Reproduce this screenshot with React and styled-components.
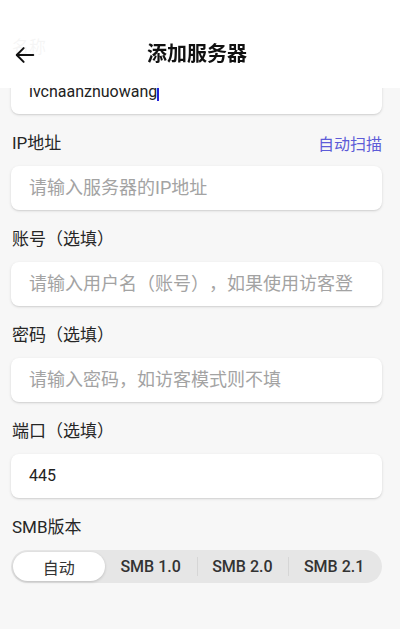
import React from "react";
import styled, { createGlobalStyle } from "styled-components";

const Global = createGlobalStyle`
  html, body { margin: 0; padding: 0; background: #f7f7f7; }
  body {
    font-family: Roboto, "Noto Sans CJK SC", sans-serif;
    color: #222;
    text-spacing-trim: space-all;
  }
  * { box-sizing: border-box; }
`;

const Page = styled.div`
  min-height: 629px;
  background: #f7f7f7;
  padding: 36px 18px 30px 11px;
  display: flex;
  flex-direction: column;
`;

const Header = styled.header`
  position: fixed;
  top: 0;
  left: 0;
  right: 0;
  height: 88px;
  padding: 20px 20px 0 14px;
  background: rgba(255, 255, 255, 0.955);
  display: grid;
  grid-template-columns: 1fr auto 1fr;
  align-items: center;
  z-index: 10;
`;

const BackButton = styled.button`
  justify-self: start;
  border: 0;
  background: none;
  padding: 0;
  margin-top: 2px;
  display: flex;
  color: #111;
`;

const Title = styled.h1`
  margin: 0;
  font-size: 20px;
  font-weight: 700;
  color: #111;
  line-height: 28px;
`;

const Field = styled.section`
  display: flex;
  flex-direction: column;
  margin-bottom: 18px;
`;

const LabelRow = styled.div`
  display: flex;
  justify-content: space-between;
  align-items: center;
  height: 22px;
  margin-bottom: 12px;
`;

const Label = styled.span`
  font-size: 17px;
  line-height: 22px;
  color: #262626;
  padding-left: 1px;
`;

const Action = styled.span`
  font-size: 16px;
  color: #5d5bd8;
`;

const Input = styled.div`
  height: 44px;
  background: #fff;
  border-radius: 8px;
  box-shadow: 0 1px 3px rgba(0, 0, 0, 0.13), 0 1px 1px rgba(0, 0, 0, 0.05);
  padding: 0 19px 0 18px;
  overflow: hidden;
  white-space: nowrap;
  text-overflow: clip;
  font-size: ${(p) => (p.$placeholder ? "18px" : "16px")};
  line-height: 44px;
  color: ${(p) => (p.$placeholder ? "#a3a3a3" : "#222")};
`;

const Caret = styled.span`
  display: inline-block;
  width: 2px;
  height: 18px;
  background: #2424d8;
  vertical-align: -4px;
`;

const Segmented = styled.div`
  display: grid;
  grid-template-columns: repeat(4, 1fr);
  height: 33px;
  padding: 2px;
  border-radius: 17px;
  background: #e6e6e6;
`;

const Segment = styled.div`
  position: relative;
  display: flex;
  align-items: center;
  justify-content: center;
  font-size: 16px;
  font-weight: ${(p) => (p.$active ? 400 : 500)};
  color: #333;
  border-radius: 15px;
  background: ${(p) => (p.$active ? "#fff" : "transparent")};
  box-shadow: ${(p) => (p.$active ? "0 1px 3px rgba(0,0,0,0.18)" : "none")};
  ${(p) =>
    p.$divider &&
    `
    &::before {
      content: "";
      position: absolute;
      left: 0;
      top: 5px;
      bottom: 5px;
      width: 1px;
      background: #d6d6d6;
    }
  `}
`;

const fields = [
  { label: "IP地址", action: "自动扫描", placeholder: "请输入服务器的IP地址" },
  { label: "账号（选填）", placeholder: "请输入用户名（账号），如果使用访客登" },
  { label: "密码（选填）", placeholder: "请输入密码，如访客模式则不填" },
  { label: "端口（选填）", value: "445" },
];

const versions = ["自动", "SMB 1.0", "SMB 2.0", "SMB 2.1"];

export default function App() {
  return (
    <>
      <Global />
      <Header>
        <BackButton aria-label="返回">
          <svg width="22" height="22" viewBox="0 0 24 24" fill="none" stroke="currentColor" strokeWidth="2.2" strokeLinecap="round" strokeLinejoin="round">
            <path d="M21 12H3.5" />
            <path d="M10.5 4.5 3 12l7.5 7.5" />
          </svg>
        </BackButton>
        <Title>添加服务器</Title>
        <span />
      </Header>
      <Page>
        <Field>
          <LabelRow>
            <Label>名称</Label>
          </LabelRow>
          <Input>
            lvchaanzhuowang<Caret />
          </Input>
        </Field>
        {fields.map((f) => (
          <Field key={f.label}>
            <LabelRow>
              <Label>{f.label}</Label>
              {f.action && <Action>{f.action}</Action>}
            </LabelRow>
            <Input $placeholder={!f.value}>{f.value || f.placeholder}</Input>
          </Field>
        ))}
        <Field>
          <LabelRow>
            <Label>SMB版本</Label>
          </LabelRow>
          <Segmented>
            {versions.map((v, i) => (
              <Segment key={v} $active={i === 0} $divider={i > 1}>
                {v}
              </Segment>
            ))}
          </Segmented>
        </Field>
      </Page>
    </>
  );
}
